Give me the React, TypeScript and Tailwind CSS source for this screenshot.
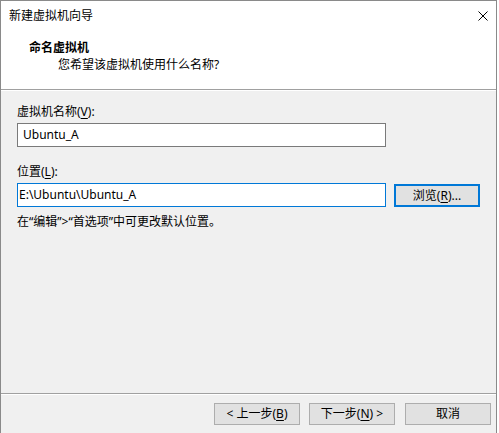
import React from 'react'

const Mnemonic = ({ children }: { children: React.ReactNode }) => (
  <span className="underline underline-offset-2">{children}</span>
)

const WinButton = ({ children }: { children: React.ReactNode }) => (
  <button
    type="button"
    className="flex h-[22px] w-[86px] items-center justify-center border border-[#adadad] bg-[#e1e1e1] text-black"
  >
    {children}
  </button>
)

export default function App() {
  return (
    <div className="h-[433px] w-[499px] bg-white font-['Noto_Sans','Noto_Sans_CJK_SC',sans-serif] text-[12px] leading-4 text-black">
      <div className="flex h-full w-[497px] flex-col border-x border-t border-[#8a8a8a] bg-[#f0f0f0]">
        {/* title bar + header */}
        <div className="flex h-[88px] flex-col bg-white">
          <div className="flex items-start justify-between pt-[7px] pl-[8px]">
            <span>新建虚拟机向导</span>
            <svg
              className="mt-[3px] mr-[8px]"
              width="10"
              height="10"
              viewBox="0 0 10 10"
            >
              <path
                d="M0.5 0.5 L9.5 9.5 M9.5 0.5 L0.5 9.5"
                stroke="#000"
                strokeWidth="1"
                fill="none"
              />
            </svg>
          </div>
          <div className="pt-[16px] pl-[28px] font-bold">命名虚拟机</div>
          <div className="pt-[1px] pl-[57px]">您希望该虚拟机使用什么名称?</div>
        </div>
        <div className="h-px bg-[#a0a0a0]" />
        <div className="h-px bg-white" />

        {/* body */}
        <div className="flex flex-1 flex-col px-[16px] pt-[13px]">
          <div>
            虚拟机名称(<Mnemonic>V</Mnemonic>):
          </div>
          <div className="mt-[3px] flex h-[24px] w-[369px] items-center border border-[#7a7a7a] bg-white pl-[5px]">
            Ubuntu_A
          </div>
          <div className="mt-[17px]">
            位置(<Mnemonic>L</Mnemonic>):
          </div>
          <div className="mt-[3px] flex items-start">
            <div className="flex h-[24px] w-[369px] items-center border border-[#0078d7] bg-white pl-[1px]">
              E:\Ubuntu\Ubuntu_A
            </div>
            <button
              type="button"
              className="mt-[1px] ml-[8px] flex h-[23px] w-[86px] items-center justify-center border-2 border-[#0078d7] bg-[#e1e1e1]"
            >
              浏览(<Mnemonic>R</Mnemonic>)...
            </button>
          </div>
          <div className="mt-[7px]">在“编辑”&gt;“首选项”中可更改默认位置。</div>
        </div>

        <div className="h-px bg-[#a0a0a0]" />
        <div className="h-px bg-white" />

        {/* footer buttons */}
        <div className="flex h-[38px] items-start justify-end pt-[8px] pr-[5px]">
          <WinButton>
            &lt; 上一步(<Mnemonic>B</Mnemonic>)
          </WinButton>
          <div className="w-[9px]" />
          <WinButton>
            下一步(<Mnemonic>N</Mnemonic>) &gt;
          </WinButton>
          <div className="w-[10px]" />
          <WinButton>取消</WinButton>
        </div>
      </div>
    </div>
  )
}
